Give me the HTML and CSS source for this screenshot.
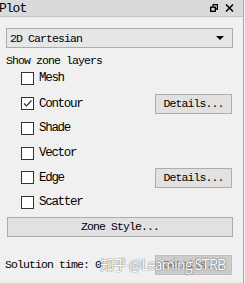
FILE: index.html
```html
<!DOCTYPE html>
<html>
  <head>
    <title>Plot</title>
    <link rel="stylesheet" href="styles.css">
  </head>
  <body>
    <div class="panel">
      <div class="titlebar">
        <span class="title">Plot</span>
        <span class="tools">
          <svg width="8" height="8" viewBox="0 0 8 8"><path d="M3 0.5h4.5v4.5h-2M3 0.5v2" fill="none" stroke="#000" stroke-width="1.4"/><rect x="0.7" y="3.2" width="4.6" height="4.1" fill="none" stroke="#000" stroke-width="1.4"/></svg>
          <svg width="9" height="8" viewBox="0 0 9 8"><path d="M1 0.5l7 7M8 0.5l-7 7" stroke="#000" stroke-width="1.5"/></svg>
        </span>
      </div>

      <div class="content">
        <div class="combo">
          <span>2D Cartesian</span>
          <svg width="8" height="4" viewBox="0 0 8 4"><path d="M0 0h8l-4 4z" fill="#000"/></svg>
        </div>

        <div class="heading">Show zone layers</div>

        <div class="layers">
          <div class="row"><span class="check"></span><span class="label">Mesh</span></div>
          <div class="row"><span class="check checked"><svg width="11" height="11" viewBox="0 0 11 11"><path d="M2 5.5l2.5 2.5l5-5.5" fill="none" stroke="#333" stroke-width="1.2"/></svg></span><span class="label">Contour</span><button class="btn details">Details...</button></div>
          <div class="row"><span class="check"></span><span class="label">Shade</span></div>
          <div class="row"><span class="check"></span><span class="label">Vector</span></div>
          <div class="row"><span class="check"></span><span class="label">Edge</span><button class="btn details">Details...</button></div>
          <div class="row"><span class="check"></span><span class="label">Scatter</span></div>
        </div>

        <button class="btn zone">Zone Style...</button>

        <div class="solution">
          <span>Solution time: 0</span>
          <button class="btn details disabled">Details...</button>
        </div>
      </div>

      <div class="watermark">知乎 @Learning STRB</div>
    </div>
  </body>
</html>
```

FILE: styles.css
```css
body {
  margin: 0;
  background: #f4f4f4;
  font-family: "Liberation Mono", monospace;
  font-size: 11.5px;
  letter-spacing: -0.9px;
  color: #000;
}

.panel {
  position: relative;
  width: 243px;
  height: 283px;
  background: #f0f0f0;
  border-right: 1px solid #a8a8a8;
  overflow: hidden;
}

.titlebar {
  height: 16px;
  background: #dadada;
  border-bottom: 1px solid #c4c4c4;
  display: flex;
  align-items: center;
  justify-content: space-between;
}

.title {
  margin-left: -1px;
  font-size: 13px;
  letter-spacing: -1px;
}

.tools {
  display: flex;
  align-items: center;
  gap: 7px;
  margin-right: 9px;
  margin-top: -1px;
}

.content {
  padding: 11px 10px 0 6px;
}

.combo {
  height: 18px;
  border: 1px solid #adadad;
  background: #e6e6e6;
  display: flex;
  align-items: center;
  justify-content: space-between;
  padding: 0 8px 0 3px;
}

.heading {
  margin-top: 5px;
  height: 15px;
  line-height: 15px;
}

.layers {
  margin-top: -2px;
  padding-left: 15px;
}

.row {
  height: 24.6px;
  display: flex;
  align-items: center;
}

.row:nth-child(2) {
  margin-top: 1px;
}

.check {
  width: 11px;
  height: 11px;
  border: 1px solid #333;
  background: #fff;
  display: flex;
  align-items: center;
  justify-content: center;
}

.label {
  margin-left: 5px;
  font-size: 12.5px;
  letter-spacing: -1.3px;
}

.btn {
  font-family: "Liberation Mono", monospace;
  font-size: 11.5px;
  letter-spacing: -0.9px;
  color: #000;
  background: #e1e1e1;
  border: 1px solid #adadad;
  padding: 0;
  height: 20px;
}

.details {
  width: 77px;
  margin-left: auto;
  margin-right: 1px;
}

.zone {
  display: block;
  width: 226px;
  margin: 2px 0 0 1px;
}

.solution {
  margin-top: 18px;
  display: flex;
  align-items: center;
}

.solution span {
  margin-left: -1px;
}

.disabled {
  background: #cccccc;
  border-color: #bfbfbf;
  color: #838383;
}

.watermark {
  position: absolute;
  left: 100px;
  top: 254px;
  font-family: "Noto Sans CJK SC", sans-serif;
  font-size: 14px;
  letter-spacing: -0.8px;
  color: #fff;
  text-shadow: 0 0 1px rgba(0, 0, 0, 0.6), 0 0 2px rgba(0, 0, 0, 0.3);
}
```
